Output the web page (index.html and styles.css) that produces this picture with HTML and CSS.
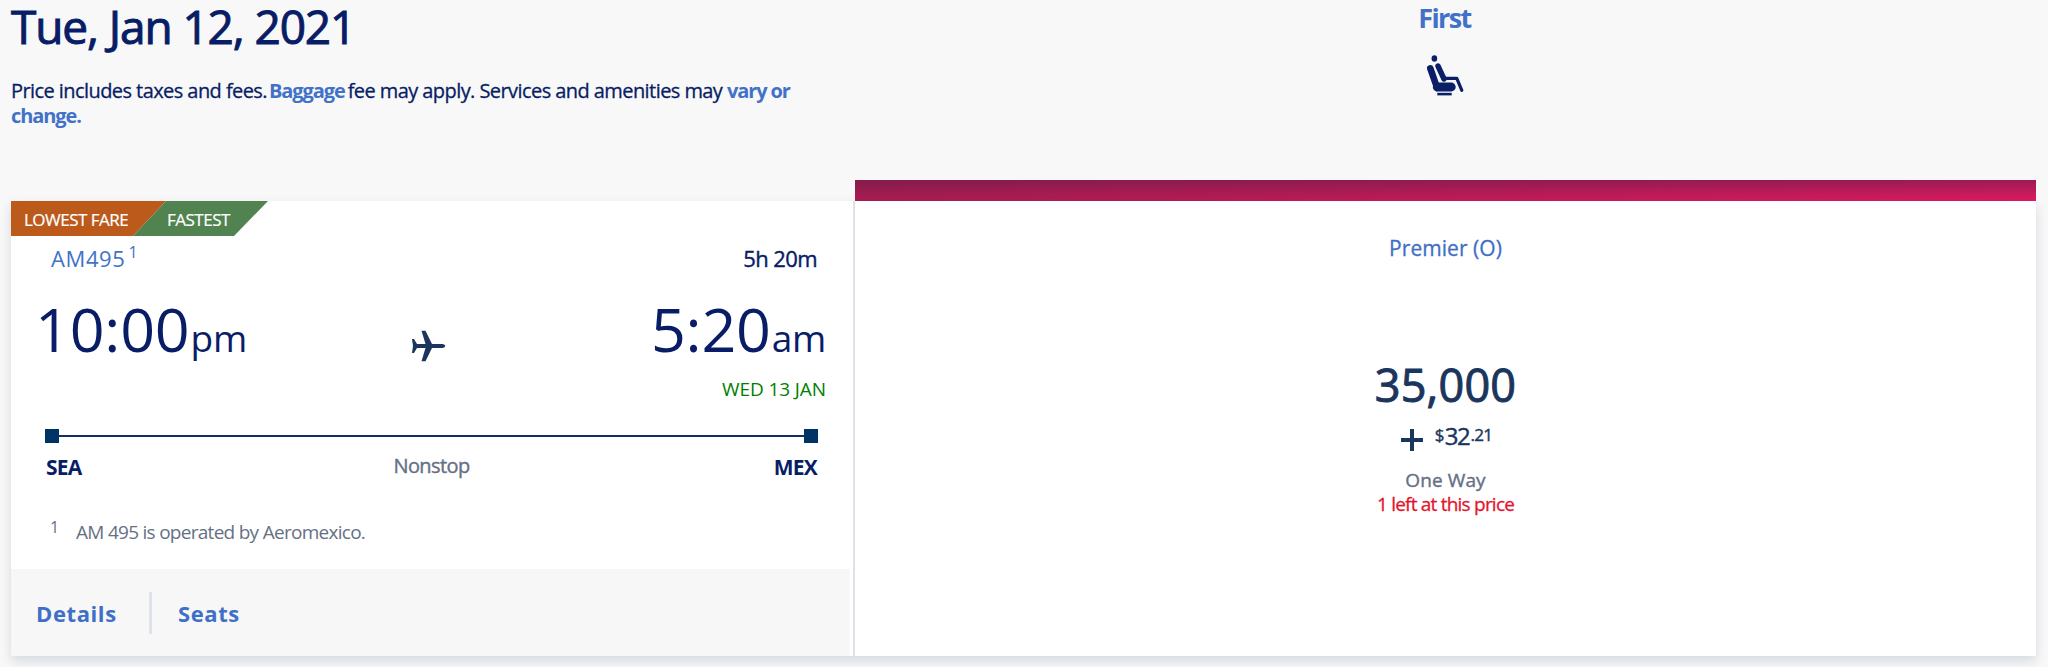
FILE: index.html
```
<!DOCTYPE html>
<html lang="en">
<head>
    <meta charset="UTF-8">
    <meta name="viewport" content="width=device-width, initial-scale=1.0">
    <title>Flight Results</title>
    <link rel="stylesheet" href="styles.css">
</head>
<body>

<div class="results">
    <div class="results-header">
        <div class="header-info">
            <h1 class="date">Tue, Jan 12, 2021</h1>
            <p class="fees">Price includes taxes and fees.<a class="baggage">Baggage</a>fee may apply. Services and amenities may <a class="vary">vary or<br>change.</a></p>
        </div>
        <div class="header-cabin">
            <div class="cabin-name">First</div>
            <svg class="seat-icon" width="38" height="42" viewBox="0 0 38 42" fill="none" stroke="#0a1f66">
                <ellipse cx="8.4" cy="4.5" rx="2.8" ry="3.3" fill="#0a1f66" stroke="none"/>
                <path d="M4.3 14.3 L11.2 34" stroke-width="6.6" stroke-linecap="round"/>
                <path d="M11.2 33 H25.3" stroke-width="8.8" stroke-linecap="round"/>
                <path d="M12 12 L18 25" stroke-width="5.4" stroke-linecap="round"/>
                <path d="M17 24.3 H30.8 L35.8 36.3" stroke-width="3.2" stroke-linecap="round" stroke-linejoin="round"/>
                <path d="M11.3 40.1 H25.7" stroke-width="2.6"/>
            </svg>
        </div>
    </div>

    <div class="cabin-bar"></div>

    <div class="card">
        <div class="flight">
            <div class="tags">
                <span class="tag lowest">LOWEST FARE</span>
                <span class="tag fastest">FASTEST</span>
            </div>
            <div class="row flight-row">
                <a class="flight-number">AM495<span class="note-mark">1</span></a>
                <span class="duration">5h 20m</span>
            </div>
            <div class="row time-row">
                <div class="time depart">10:00<span class="ampm">pm</span></div>
                <svg class="plane-icon" width="35" height="32" viewBox="0 0 35 32" fill="#1b365d">
                    <path d="M1 9 H3 L6 14 H14.5 L10.5 0.8 H14.5 L21 14 H31.5 Q34.3 14.4 34.3 16 Q34.3 17.6 31.5 18 H21 L14.5 31.2 H10.5 L14.5 18 H6 L3 23 H1 L2 16 Z"/>
                </svg>
                <div class="time arrive">5:20<span class="ampm">am</span></div>
            </div>
            <div class="arrive-date">WED 13 JAN</div>
            <div class="route-line">
                <span class="stop"></span>
                <span class="line"></span>
                <span class="stop"></span>
            </div>
            <div class="row airports">
                <span class="airport">SEA</span>
                <span class="nonstop">Nonstop</span>
                <span class="airport">MEX</span>
            </div>
            <div class="footnote"><span class="footnote-mark">1</span><span>AM 495 is operated by Aeromexico.</span></div>
            <div class="actions">
                <a class="action details">Details</a>
                <a class="action seats">Seats</a>
            </div>
        </div>

        <div class="fare">
            <a class="fare-name">Premier (O)</a>
            <div class="miles">35,000</div>
            <div class="taxes">
                <svg width="22" height="22" viewBox="0 0 22 22" stroke="#1b365d" stroke-width="4">
                    <path d="M11 0 V22 M0 11 H22"/>
                </svg>
                <div class="price"><span class="small">$</span>32<span class="small cents">.21</span></div>
            </div>
            <div class="one-way">One Way</div>
            <div class="seats-left">1 left at this price</div>
        </div>
    </div>
</div>

</body>
</html>
```
FILE: styles.css
```
body {
    font-family: "Open Sans", "Noto Sans", sans-serif;
    background-color: #f8f8f8;
    color: #081d66;
    margin: 0;
}
.results {
    width: 2025px;
    height: 667px;
    margin-left: 11px;
}
.results-header {
    display: grid;
    grid-template-columns: 844px 1181px;
    height: 180px;
}
.date {
    margin: 0;
    font-size: 46px;
    font-weight: 500;
    line-height: 52px;
    letter-spacing: -1.1px;
    white-space: nowrap;
    -webkit-text-stroke: 1px;
}
.fees {
    margin: 26px 0 0;
    font-size: 20px;
    font-weight: 500;
    line-height: 25px;
    letter-spacing: -0.57px;
    white-space: nowrap;
    -webkit-text-stroke: 0.3px;
}
.baggage, .vary {
    color: #4272c8;
    font-weight: 700;
    letter-spacing: -1.1px;
    -webkit-text-stroke: 0;
}
.baggage {
    margin: 0 3px 0 2px;
}
.header-cabin {
    display: flex;
    flex-direction: column;
    align-items: center;
}
.cabin-name {
    margin-right: 2px;
    color: #4272c8;
    font-size: 27px;
    font-weight: 700;
    line-height: 35px;
    letter-spacing: -1.6px;
}
.seat-icon {
    margin-top: 19px;
    margin-right: 2px;
}
.cabin-bar {
    height: 21px;
    margin-left: 844px;
    background: linear-gradient(to bottom, rgba(94, 28, 72, 0.5), rgba(190, 24, 86, 0) 90%), linear-gradient(to right, #a81c50, #d91a60);
}
.card {
    display: grid;
    grid-template-columns: 842px 1fr;
    height: 455px;
    background-color: white;
    box-shadow: 0 5px 10px rgba(40, 60, 110, 0.16);
}
.flight {
    display: flex;
    flex-direction: column;
}
.tags {
    display: flex;
    height: 35px;
}
.tag {
    box-sizing: border-box;
    color: white;
    font-size: 17px;
    line-height: 37px;
    letter-spacing: -0.5px;
    white-space: nowrap;
    -webkit-text-stroke: 0.2px;
}
.lowest {
    width: 155px;
    padding-left: 13px;
    background-color: #bc5a1c;
    clip-path: polygon(0 0, 100% 0, 122px 100%, 0 100%);
}
.fastest {
    width: 135px;
    margin-left: -33px;
    padding-left: 34px;
    background-color: #50834f;
    clip-path: polygon(33px 0, 100% 0, 101px 100%, 0 100%);
}
.row {
    display: flex;
    justify-content: space-between;
}
.flight-row {
    height: 44px;
    padding: 0 36px 0 40px;
    line-height: 44px;
    font-size: 22px;
}
.flight-number {
    color: #4272c8;
    letter-spacing: 0.6px;
}
.note-mark {
    margin-left: 3px;
    font-size: 16px;
    position: relative;
    top: -9px;
}
.duration {
    font-weight: 500;
    letter-spacing: -0.6px;
    -webkit-text-stroke: 0.4px;
}
.time-row {
    height: 90px;
    padding: 0 27px 0 24px;
}
.time {
    width: 240px;
    font-size: 61px;
    line-height: 98px;
    letter-spacing: -0.2px;
    white-space: nowrap;
}
.arrive {
    text-align: right;
}
.ampm {
    margin-left: 1px;
    font-size: 37px;
    letter-spacing: -0.3px;
}
.plane-icon {
    margin: 50px 5px 0 0;
}
.arrive-date {
    height: 40px;
    margin-right: 27px;
    color: #008000;
    font-size: 19px;
    line-height: 38px;
    letter-spacing: -0.1px;
    text-align: right;
}
.route-line {
    display: flex;
    align-items: center;
    height: 14px;
    margin: 19px 35px 0 34px;
}
.stop {
    width: 14px;
    height: 14px;
    background-color: #003366;
}
.line {
    flex: 1;
    height: 2px;
    background-color: #12305f;
}
.airports {
    height: 48px;
    padding: 0 36px 0 35px;
    font-size: 21px;
    line-height: 48px;
}
.airport {
    width: 60px;
    font-weight: 700;
    letter-spacing: -0.8px;
}
.airport:last-child {
    text-align: right;
}
.nonstop {
    color: #667085;
    font-size: 20px;
    font-weight: 500;
    line-height: 45px;
    letter-spacing: -0.6px;
    -webkit-text-stroke: 0.4px;
}
.footnote {
    display: flex;
    margin-top: 20px;
    padding-left: 39px;
    color: #667085;
    font-size: 19px;
    line-height: 42px;
    letter-spacing: -0.72px;
}
.footnote-mark {
    width: 26px;
    font-size: 16px;
    line-height: 32px;
}
.actions {
    display: flex;
    align-items: center;
    height: 87px;
    width: 839px;
    margin-top: auto;
    background-color: #f7f7f7;
}
.action {
    color: #3f6fc6;
    font-size: 22px;
    font-weight: 700;
    line-height: 42px;
    letter-spacing: 0.6px;
}
.details {
    width: 113px;
    padding-left: 25px;
    border-right: 3px solid #dde2eb;
}
.seats {
    padding-left: 26px;
}
.fare {
    display: flex;
    flex-direction: column;
    align-items: center;
    border-left: 2px solid #dde1ea;
}
.fare-name {
    margin-top: 27px;
    color: #3f6fc6;
    font-size: 21px;
    font-weight: 500;
    line-height: 40px;
    letter-spacing: 0.05px;
    -webkit-text-stroke: 0.3px;
}
.miles {
    margin-top: 87px;
    color: #1b365d;
    font-size: 45px;
    font-weight: 500;
    line-height: 60px;
    letter-spacing: 0.2px;
    -webkit-text-stroke: 1px;
}
.taxes {
    display: flex;
    align-items: center;
    height: 40px;
    margin: 5px 0 0 2px;
    color: #1b365d;
}
.price {
    margin: -6px 0 0 12px;
    font-size: 24px;
    font-weight: 500;
    line-height: 32px;
    letter-spacing: -1.3px;
    -webkit-text-stroke: 0.4px;
}
.small {
    margin-right: 1px;
    font-size: 17px;
    letter-spacing: -0.7px;
    position: relative;
    top: -4px;
}
.cents {
    margin: 0 0 0 1px;
}
.one-way {
    margin-top: 8px;
    color: #667085;
    font-size: 19px;
    font-weight: 500;
    line-height: 24px;
    letter-spacing: 0.1px;
    -webkit-text-stroke: 0.4px;
}
.seats-left {
    color: #e3142d;
    font-size: 19px;
    font-weight: 500;
    line-height: 24px;
    letter-spacing: -0.78px;
    -webkit-text-stroke: 0.3px;
}
```
